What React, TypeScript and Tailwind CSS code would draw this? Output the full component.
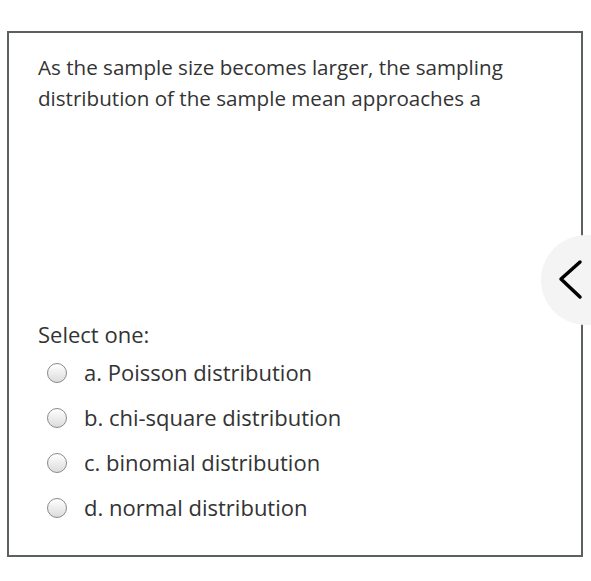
import React from "react";

const options = [
  "a. Poisson distribution",
  "b. chi-square distribution",
  "c. binomial distribution",
  "d. normal distribution",
];

function Radio() {
  return (
    <span className="block w-[20px] h-[20px] rounded-full border border-[#8a8a8a] bg-gradient-to-b from-white to-[#dcdcdc] shrink-0" />
  );
}

export default function App() {
  return (
    <div
      className="relative w-[591px] h-[581px] bg-white overflow-hidden text-[#333333]"
      style={{ fontFamily: '"Open Sans", "Noto Sans", sans-serif' }}
    >
      <div className="pt-[31px] pl-[7px]">
        <div className="w-[576px] h-[526px] border-2 border-[#5b6161] pt-[19px] pl-[29px]">
          <p className="text-[20.6px] leading-[31px]">
            As the sample size becomes larger, the sampling
            <br />
            distribution of the sample mean approaches a
          </p>
          <p className="mt-[205px] text-[22px] leading-[31px]">Select one:</p>
          <ul className="mt-[7px] flex flex-col gap-[14px]">
            {options.map((o) => (
              <li key={o} className="flex items-center pl-[9px] h-[31px]">
                <Radio />
                <span className="ml-[17px] text-[22px] leading-[31px]">{o}</span>
              </li>
            ))}
          </ul>
        </div>
      </div>

      {/* floating nav button */}
      <div className="absolute left-[541px] top-[235px] w-[90px] h-[90px] rounded-full bg-[#f4f4f4]">
        <svg width="90" height="90" viewBox="0 0 90 90" className="absolute left-0 top-0">
          <polyline
            points="39,27 20,44 39,62"
            fill="none"
            stroke="#000"
            strokeWidth="3.5"
            strokeLinecap="round"
            strokeLinejoin="round"
          />
        </svg>
      </div>
    </div>
  );
}
